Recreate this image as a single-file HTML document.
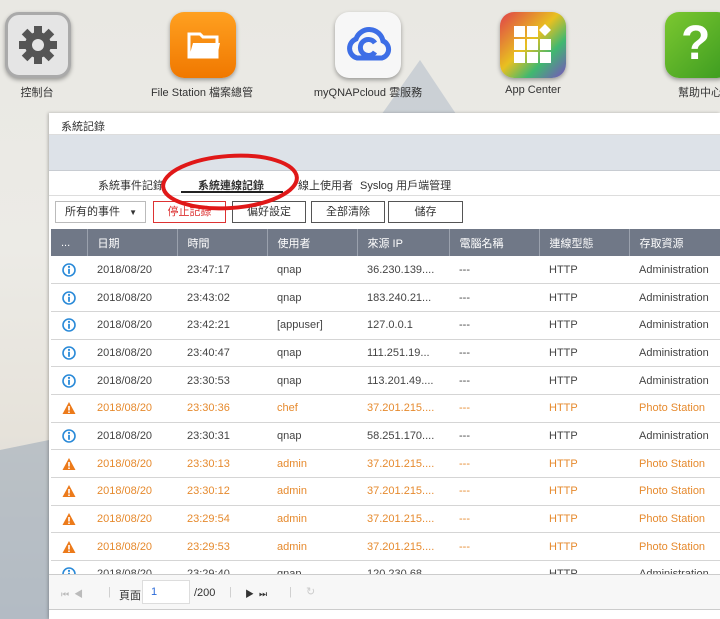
<!DOCTYPE html>
<html><head><meta charset="utf-8"><style>
*{margin:0;padding:0;box-sizing:border-box}
body{width:720px;height:619px;overflow:hidden;position:relative;font-family:"Liberation Sans","Noto Sans CJK TC",sans-serif;font-size:11px;color:#333;background:linear-gradient(180deg,#e9e8e3 0%,#ecebe6 40%,#e6e2da 70%,#c8cdd2 100%)}
.ic{position:absolute;top:12px;width:66px;height:66px;border-radius:14px;box-shadow:0 2px 4px rgba(0,0,0,.35)}
.lb{position:absolute;top:84px;font-size:11px;color:#333;text-align:center;width:160px}
.win{position:absolute;left:49px;top:113px;width:671px;height:506px;background:#fff;box-shadow:-1px 0 3px rgba(0,0,0,.25)}
.t{position:absolute;white-space:nowrap}
table{border-collapse:collapse;position:absolute;left:2px;top:116px;width:669px;table-layout:fixed}
td,th{height:27.7px;padding-left:10px;white-space:nowrap;overflow:hidden;font-weight:normal;text-align:left;font-size:11px}
td:first-child{padding-left:11px;padding-top:3px}
th{background:#707887;color:#fff;height:27px;border-right:1px solid #9aa1ad}
td{border-bottom:1px solid #d5d5d5;color:#444}
tr.w td{color:#e68a2e}
.btn{position:absolute;top:88px;height:22px;border:1px solid #555;background:#fff;font-size:11px;text-align:center;line-height:20px}
</style></head><body>
<svg style="position:absolute;left:0;top:0" width="720" height="619"><polygon points="420,60 520,210 300,230" fill="#b5bfcb" opacity=".6"/><polygon points="0,450 49,440 49,619 0,619" fill="#a9b3bd" opacity=".7"/></svg>
<div class="ic" style="left:5px;background:#e5e5e5;border:3px solid #aaa"><svg width="60" height="60" viewBox="0 0 60 60"><g fill="#555" transform="translate(30 30)"><circle r="13"/><g id="g"><rect x="-4" y="-19" width="8" height="8"/></g><use href="#g" transform="rotate(45)"/><use href="#g" transform="rotate(90)"/><use href="#g" transform="rotate(135)"/><use href="#g" transform="rotate(180)"/><use href="#g" transform="rotate(225)"/><use href="#g" transform="rotate(270)"/><use href="#g" transform="rotate(315)"/><circle r="6" fill="#e5e5e5"/></g></svg></div>
<div class="lb" style="left:-43px">控制台</div>
<div class="ic" style="left:170px;background:linear-gradient(#ffa020,#f07800)"><svg width="66" height="66"><path d="M19 22h11l3 3h14v20H19z" fill="none" stroke="#fff" stroke-width="3"/><path d="M19 45l4-14h27l-3 14z" fill="#fff"/></svg></div>
<div class="lb" style="left:122px">File Station 檔案總管</div>
<div class="ic" style="left:335px;background:#f7f7f7"><svg width="66" height="66"><path d="M22 46a10 10 0 0 1-1-19a14 14 0 0 1 27 2a9 9 0 0 1-1 17z" fill="none" stroke="#3d6ee6" stroke-width="5"/><path d="M40 40a8 8 0 1 1 0-9" fill="none" stroke="#3d6ee6" stroke-width="5"/></svg></div>
<div class="lb" style="left:288px">myQNAPcloud 雲服務</div>
<div class="ic" style="left:500px;background:linear-gradient(135deg,#e0404a,#e8c020 45%,#40b870 70%,#7a50c0)"><svg width="66" height="66" fill="#fff"><rect x="14" y="14" width="11" height="11"/><rect x="27" y="14" width="11" height="11"/><rect x="14" y="27" width="11" height="11"/><rect x="27" y="27" width="11" height="11"/><rect x="40" y="27" width="11" height="11"/><rect x="14" y="40" width="11" height="11"/><rect x="27" y="40" width="11" height="11"/><rect x="40" y="40" width="11" height="11"/><path d="M45 12l6 6-6 6-6-6z"/></svg></div>
<div class="lb" style="left:453px">App Center</div>
<div class="ic" style="left:665px;background:linear-gradient(135deg,#7cc830,#3a9a20)"><div style="color:#fff;font-size:48px;font-weight:bold;position:absolute;left:16px;top:4px">?</div></div>
<div class="lb" style="left:620px">幫助中心</div>
<svg width="0" height="0" style="position:absolute"><defs>
<symbol id="inf" viewBox="0 0 14 14"><circle cx="7" cy="7" r="6" fill="#fff" stroke="#2a8ad8" stroke-width="1.6"/><rect x="6.1" y="5.8" width="1.8" height="5" fill="#2a8ad8"/><circle cx="7" cy="3.9" r="1.1" fill="#2a8ad8"/></symbol>
<symbol id="wrn" viewBox="0 0 14 14"><path d="M7 1L13.5 13H0.5z" fill="#ec7a1a"/><rect x="6.2" y="5" width="1.6" height="4.5" fill="#fff"/><rect x="6.2" y="10.5" width="1.6" height="1.5" fill="#fff"/></symbol>
</defs></svg>
<div class="win">
<div style="position:absolute;left:0;top:0;width:671px;height:22px;background:#fff;border-bottom:1px solid #ddd"></div>
<div class="t" style="left:12px;top:5px;font-size:11px">系統記錄</div>
<div style="position:absolute;left:0;top:22px;width:671px;height:36px;background:#dde2e8;border-bottom:1px solid #c8ccd2"></div>
<div class="t" style="left:49px;top:64px">系統事件記錄</div>
<div class="t" style="left:149px;top:64px;font-weight:bold">系統連線記錄</div>
<div style="position:absolute;left:132px;top:78px;width:102px;height:2px;background:#222"></div>
<div class="t" style="left:249px;top:64px">線上使用者</div>
<div class="t" style="left:311px;top:64px">Syslog 用戶端管理</div>
<div style="position:absolute;left:0;top:82px;width:671px;height:1px;background:#ddd"></div>
<div class="btn" style="left:6px;width:91px;border-color:#bbb;text-align:left;padding-left:9px">所有的事件 &nbsp;&nbsp;<span style="font-size:8px">▼</span></div>
<div class="btn" style="left:104px;width:73px;border-color:#d33;color:#d33">停止記錄</div>
<div class="btn" style="left:183px;width:74px">偏好設定</div>
<div class="btn" style="left:262px;width:74px">全部清除</div>
<div class="btn" style="left:339px;width:75px">儲存</div>
<svg style="position:absolute;left:110px;top:38px" width="142" height="62"><ellipse cx="71" cy="31" rx="67" ry="26" fill="none" stroke="#e01818" stroke-width="4" transform="rotate(-4 71 31)"/></svg>
<div style="position:absolute;left:0;top:116px;width:671px;height:345px;overflow:hidden">
<table style="top:0;left:2px">
<colgroup><col style="width:36px"><col style="width:90px"><col style="width:90px"><col style="width:90px"><col style="width:92px"><col style="width:90px"><col style="width:90px"><col style="width:91px"></colgroup>
<tr><th>...</th><th>日期</th><th>時間</th><th>使用者</th><th>來源 IP</th><th>電腦名稱</th><th>連線型態</th><th>存取資源</th></tr>
<tr><td><svg width="14" height="14"><use href="#inf"/></svg></td><td>2018/08/20</td><td>23:47:17</td><td>qnap</td><td>36.230.139....</td><td>---</td><td>HTTP</td><td>Administration</td></tr>
<tr><td><svg width="14" height="14"><use href="#inf"/></svg></td><td>2018/08/20</td><td>23:43:02</td><td>qnap</td><td>183.240.21...</td><td>---</td><td>HTTP</td><td>Administration</td></tr>
<tr><td><svg width="14" height="14"><use href="#inf"/></svg></td><td>2018/08/20</td><td>23:42:21</td><td>[appuser]</td><td>127.0.0.1</td><td>---</td><td>HTTP</td><td>Administration</td></tr>
<tr><td><svg width="14" height="14"><use href="#inf"/></svg></td><td>2018/08/20</td><td>23:40:47</td><td>qnap</td><td>111.251.19...</td><td>---</td><td>HTTP</td><td>Administration</td></tr>
<tr><td><svg width="14" height="14"><use href="#inf"/></svg></td><td>2018/08/20</td><td>23:30:53</td><td>qnap</td><td>113.201.49....</td><td>---</td><td>HTTP</td><td>Administration</td></tr>
<tr class="w"><td><svg width="14" height="14"><use href="#wrn"/></svg></td><td>2018/08/20</td><td>23:30:36</td><td>chef</td><td>37.201.215....</td><td>---</td><td>HTTP</td><td>Photo Station</td></tr>
<tr><td><svg width="14" height="14"><use href="#inf"/></svg></td><td>2018/08/20</td><td>23:30:31</td><td>qnap</td><td>58.251.170....</td><td>---</td><td>HTTP</td><td>Administration</td></tr>
<tr class="w"><td><svg width="14" height="14"><use href="#wrn"/></svg></td><td>2018/08/20</td><td>23:30:13</td><td>admin</td><td>37.201.215....</td><td>---</td><td>HTTP</td><td>Photo Station</td></tr>
<tr class="w"><td><svg width="14" height="14"><use href="#wrn"/></svg></td><td>2018/08/20</td><td>23:30:12</td><td>admin</td><td>37.201.215....</td><td>---</td><td>HTTP</td><td>Photo Station</td></tr>
<tr class="w"><td><svg width="14" height="14"><use href="#wrn"/></svg></td><td>2018/08/20</td><td>23:29:54</td><td>admin</td><td>37.201.215....</td><td>---</td><td>HTTP</td><td>Photo Station</td></tr>
<tr class="w"><td><svg width="14" height="14"><use href="#wrn"/></svg></td><td>2018/08/20</td><td>23:29:53</td><td>admin</td><td>37.201.215....</td><td>---</td><td>HTTP</td><td>Photo Station</td></tr>
<tr><td><svg width="14" height="14"><use href="#inf"/></svg></td><td>2018/08/20</td><td>23:29:40</td><td>qnap</td><td>120.230.68...</td><td></td><td>HTTP</td><td>Administration</td></tr>
</table></div>
<div style="position:absolute;left:0;top:461px;width:671px;height:36px;background:#f7f7f7;border-top:1px solid #ccc;border-bottom:1px solid #ccc"></div>
<div class="t" style="left:12px;top:474px;color:#bbb;font-size:9px">⏮ &nbsp;◀</div>
<div class="t" style="left:59px;top:473px;color:#ccc">|</div>
<div class="t" style="left:70px;top:474px">頁面</div>
<div style="position:absolute;left:93px;top:467px;width:48px;height:24px;background:#fff;border:1px solid #ddd;color:#2a6ad8;padding:5px 8px">1</div>
<div class="t" style="left:145px;top:474px">/200</div>
<div class="t" style="left:180px;top:473px;color:#ccc">|</div>
<div class="t" style="left:196px;top:474px;font-size:9px">▶ &nbsp;⏭</div>
<div class="t" style="left:240px;top:473px;color:#ccc">|</div>
<div class="t" style="left:257px;top:472px;color:#ccc">↻</div>
</div>
</body></html>
